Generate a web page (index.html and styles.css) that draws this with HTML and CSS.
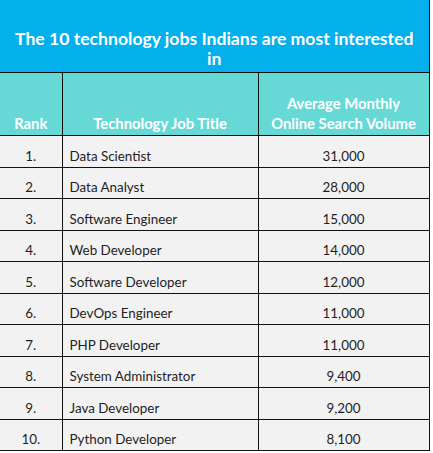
FILE: index.html
```html
<!DOCTYPE html>
<html>
<head>
<meta charset="utf-8">
<link rel="stylesheet" href="styles.css">
</head>
<body>
<table class="jobs">
  <colgroup>
    <col class="c-rank">
    <col class="c-title">
    <col class="c-vol">
  </colgroup>
  <thead>
    <tr class="banner"><th colspan="3">The 10 technology jobs Indians are most interested in</th></tr>
    <tr class="head">
      <th class="rank">Rank</th>
      <th class="title">Technology Job Title</th>
      <th class="vol">Average Monthly<br>Online Search Volume</th>
    </tr>
  </thead>
  <tbody>
    <tr><td class="rank">1.</td><td class="title">Data Scientist</td><td class="vol">31,000</td></tr>
    <tr><td class="rank">2.</td><td class="title">Data Analyst</td><td class="vol">28,000</td></tr>
    <tr><td class="rank">3.</td><td class="title">Software Engineer</td><td class="vol">15,000</td></tr>
    <tr><td class="rank">4.</td><td class="title">Web Developer</td><td class="vol">14,000</td></tr>
    <tr><td class="rank">5.</td><td class="title">Software Developer</td><td class="vol">12,000</td></tr>
    <tr><td class="rank">6.</td><td class="title">DevOps Engineer</td><td class="vol">11,000</td></tr>
    <tr><td class="rank">7.</td><td class="title">PHP Developer</td><td class="vol">11,000</td></tr>
    <tr><td class="rank">8.</td><td class="title">System Administrator</td><td class="vol">9,400</td></tr>
    <tr><td class="rank">9.</td><td class="title">Java Developer</td><td class="vol">9,200</td></tr>
    <tr><td class="rank">10.</td><td class="title">Python Developer</td><td class="vol">8,100</td></tr>
  </tbody>
</table>
</body>
</html>
```
FILE: styles.css
```css
html, body {
  margin: 0;
  padding: 0;
  background: #ffffff;
}
.jobs {
  border-collapse: collapse;
  table-layout: fixed;
  width: 429px;
  font-family: Lato, "Open Sans", sans-serif;
}
.c-rank { width: 62px; }
.c-title { width: 196px; }
.c-vol { width: 171px; }

.banner th {
  background: #03b0ec;
  color: #ffffff;
  font-size: 17.6px;
  font-weight: 700;
  line-height: 20px;
  height: 72px;
  box-sizing: border-box;
  padding: 29px 8px 3px;
  vertical-align: top;
  text-align: center;
  border-bottom: 1px solid #111;
  border-right: 1px solid #111;
}
.head th {
  background: #66d9d6;
  color: #ffffff;
  font-size: 14.8px;
  font-weight: 700;
  line-height: 20px;
  height: 63px;
  box-sizing: border-box;
  padding: 0 0 2px;
  vertical-align: bottom;
  text-align: center;
  border-bottom: 1px solid #111;
  border-right: 1px solid #111;
}

tbody td {
  background: #f2f2f2;
  color: #1e1e1e;
  font-size: 13.4px;
  height: 31.5px;
  box-sizing: border-box;
  padding: 0 0 3px;
  vertical-align: bottom;
  line-height: 16px;
  border-bottom: 1px solid #111;
  border-right: 1px solid #111;
}
tbody td.rank { text-align: center; }
tbody td.title { text-align: left; padding-left: 7px; }
tbody td.vol { text-align: center; }
```
